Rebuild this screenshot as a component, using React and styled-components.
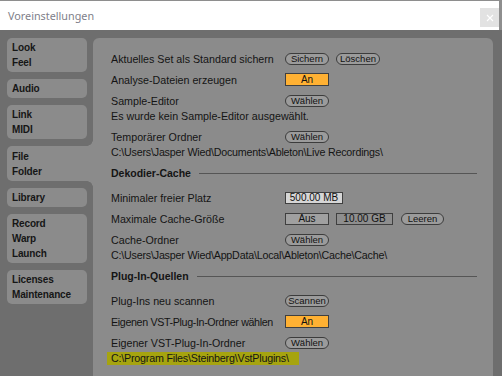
import React from "react";
import styled, { createGlobalStyle } from "styled-components";

const GlobalStyle = createGlobalStyle`
  html, body { margin: 0; padding: 0; background: #6e6e6e; overflow: hidden; }
  #root { width: 502px; height: 376px; }
  * { box-sizing: border-box; }
`;

const PANEL = "#8b8b8b";
const FONT = `"Liberation Sans", Arial, sans-serif`;

const Window = styled.div`
  width: 502px;
  height: 376px;
  display: flex;
  flex-direction: column;
  background: #6e6e6e;
  font-family: ${FONT};
  color: #141414;
`;

const TitleBar = styled.div`
  height: 30px;
  flex: none;
  background: #fff;
  border-top: 1px solid #8e8e8e;
  border-right: 3px solid #8e8e8e;
  display: flex;
  align-items: flex-start;
  justify-content: space-between;
  padding-left: 8px;
`;

const Title = styled.span`
  font-family: "Noto Sans", "Open Sans", sans-serif;
  font-size: 10.8px;
  line-height: 29px;
  color: #80808a;
`;

const CloseButton = styled.div`
  width: 19px;
  height: 19px;
  margin-top: 7px;
  background: #e2e2e2;
  display: flex;
  align-items: center;
  justify-content: center;
`;

const Body = styled.div`
  flex: 1;
  display: flex;
  gap: 6px;
  padding: 8px 9px 0 7px;
  min-height: 0;
`;

const Sidebar = styled.div`
  width: 80px;
  flex: none;
  display: flex;
  flex-direction: column;
  gap: 7px;
`;

const Tab = styled.div`
  position: relative;
  background: ${PANEL};
  border-radius: ${(p) => (p.$active ? "5px 0 0 5px" : "5px")};
  margin-right: ${(p) => (p.$active ? "-6px" : "0")};
  padding: ${(p) => (p.$active ? "3px 5px 2px" : "2px 5px")};
  font-size: 10px;
  font-weight: bold;
  line-height: 15px;
  letter-spacing: -0.15px;
  color: #161616;

  ${(p) =>
    p.$active &&
    `
    &::before, &::after {
      content: "";
      position: absolute;
      right: 0;
      width: 6px;
      height: 6px;
    }
    &::before {
      top: -6px;
      background: radial-gradient(circle at 0 0, transparent 5.5px, ${PANEL} 6px);
    }
    &::after {
      bottom: -6px;
      background: radial-gradient(circle at 0 100%, transparent 5.5px, ${PANEL} 6px);
    }
  `}
`;

const TabLine = styled.div``;

const Panel = styled.div`
  flex: 1;
  background: ${PANEL};
  border-radius: 6px 6px 0 0;
  padding: 10px 16px 0 18px;
  display: flex;
  flex-direction: column;
  font-size: 10.7px;
`;

const Row = styled.div`
  height: 21px;
  display: flex;
  align-items: center;
  flex: none;
`;

const Label = styled.div`
  width: 174px;
  flex: none;
  white-space: nowrap;
  letter-spacing: ${(p) => (p.$tight ? "-0.35px" : "0")};
`;

const Controls = styled.div`
  display: flex;
  align-items: center;
  gap: 7px;
`;

const Pill = styled.div`
  width: ${(p) => p.$w || 44}px;
  height: 12px;
  border: 1px solid #3c3c3c;
  border-radius: 6px;
  background: #9b9b9b;
  font-size: 9.5px;
  line-height: 10px;
  text-align: center;
  color: #111;
  white-space: nowrap;
  margin-left: ${(p) => p.$ml || 0}px;
`;

const boxColors = {
  on: "#ffb133",
  light: "#d6d6d6",
  dim: "#a0a0a0",
  plain: "#8e8e8e",
};

const ValueBox = styled.div`
  width: ${(p) => p.$w || 44}px;
  height: ${(p) => p.$h || 12}px;
  border: 1px solid #3f3f3f;
  background: ${(p) => boxColors[p.$variant]};
  font-size: 10px;
  line-height: ${(p) => (p.$h || 12) - 2}px;
  text-align: center;
  color: #111;
`;

const SubText = styled.div`
  height: 17px;
  line-height: 17px;
  margin: -3px 0 1px;
  white-space: nowrap;
  flex: none;
  display: flex;
  align-items: center;
  letter-spacing: ${(p) => (p.$path ? "-0.2px" : "0")};
`;

const Marked = styled.span`
  display: inline-block;
  background: #a6a40f;
  height: 13px;
  line-height: 13px;
  padding: 0 10px 0 4px;
  margin-left: -4px;
`;

const SectionHeader = styled.div`
  height: 20px;
  margin: 1px 0 4px;
  display: flex;
  align-items: center;
  gap: 8px;
  flex: none;
`;

const HeaderTitle = styled.span`
  font-weight: bold;
  font-size: 10.5px;
  white-space: nowrap;
`;

const Rule = styled.div`
  flex: 1;
  height: 1px;
  background: #555;
`;

const CloseIcon = () => (
  <svg width="8" height="8" viewBox="0 0 8 8">
    <path d="M1 1 L7 7 M7 1 L1 7" stroke="#fff" strokeWidth="1.1" />
  </svg>
);

const tabs = [
  ["Look", "Feel"],
  ["Audio"],
  ["Link", "MIDI"],
  ["File", "Folder"],
  ["Library"],
  ["Record", "Warp", "Launch"],
  ["Licenses", "Maintenance"],
];

export default function App() {
  return (
    <>
      <GlobalStyle />
      <Window>
        <TitleBar>
          <Title>Voreinstellungen</Title>
          <CloseButton>
            <CloseIcon />
          </CloseButton>
        </TitleBar>
        <Body>
          <Sidebar>
            {tabs.map((lines, i) => (
              <Tab key={i} $active={i === 3}>
                {lines.map((l) => (
                  <TabLine key={l}>{l}</TabLine>
                ))}
              </Tab>
            ))}
          </Sidebar>
          <Panel>
            <Row>
              <Label>Aktuelles Set als Standard sichern</Label>
              <Controls>
                <Pill>Sichern</Pill>
                <Pill>Löschen</Pill>
              </Controls>
            </Row>
            <Row>
              <Label>Analyse-Dateien erzeugen</Label>
              <ValueBox $variant="on" $h={13}>An</ValueBox>
            </Row>
            <Row>
              <Label>Sample-Editor</Label>
              <Pill>Wählen</Pill>
            </Row>
            <SubText>Es wurde kein Sample-Editor ausgewählt.</SubText>
            <Row>
              <Label>Temporärer Ordner</Label>
              <Pill>Wählen</Pill>
            </Row>
            <SubText $path>C:\Users\Jasper Wied\Documents\Ableton\Live Recordings\</SubText>

            <SectionHeader>
              <HeaderTitle>Dekodier-Cache</HeaderTitle>
              <Rule />
            </SectionHeader>
            <Row>
              <Label>Minimaler freier Platz</Label>
              <ValueBox $variant="light" $w={58}>500.00 MB</ValueBox>
            </Row>
            <Row>
              <Label>Maximale Cache-Größe</Label>
              <Controls>
                <ValueBox $variant="dim">Aus</ValueBox>
                <ValueBox $variant="plain" $w={57}>10.00 GB</ValueBox>
                <Pill $w={43} $ml={1}>Leeren</Pill>
              </Controls>
            </Row>
            <Row>
              <Label>Cache-Ordner</Label>
              <Pill>Wählen</Pill>
            </Row>
            <SubText $path>C:\Users\Jasper Wied\AppData\Local\Ableton\Cache\Cache\</SubText>

            <SectionHeader>
              <HeaderTitle>Plug-In-Quellen</HeaderTitle>
              <Rule />
            </SectionHeader>
            <Row>
              <Label>Plug-Ins neu scannen</Label>
              <Pill>Scannen</Pill>
            </Row>
            <Row>
              <Label $tight>Eigenen VST-Plug-In-Ordner wählen</Label>
              <ValueBox $variant="on" $h={13}>An</ValueBox>
            </Row>
            <Row>
              <Label>Eigener VST-Plug-In-Ordner</Label>
              <Pill>Wählen</Pill>
            </Row>
            <SubText $path>
              <Marked>C:\Program Files\Steinberg\VstPlugins\</Marked>
            </SubText>
          </Panel>
        </Body>
      </Window>
    </>
  );
}
